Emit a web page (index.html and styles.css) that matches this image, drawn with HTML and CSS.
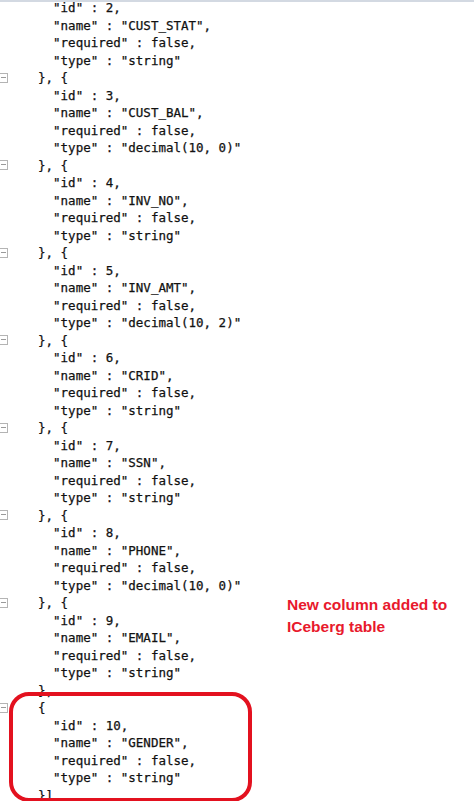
FILE: index.html
```html
<!DOCTYPE html>
<html>
<head>
<meta charset="utf-8">
<link rel="stylesheet" href="styles.css">
</head>
<body>
<div class="topbar"></div>
<div class="page">
  <div class="code">
    <div class="line"><span class="gutter"></span><span class="txt">  "id" : 2,</span></div>
    <div class="line"><span class="gutter"></span><span class="txt">  "name" : "CUST_STAT",</span></div>
    <div class="line"><span class="gutter"></span><span class="txt">  "required" : false,</span></div>
    <div class="line"><span class="gutter"></span><span class="txt">  "type" : "string"</span></div>
    <div class="line"><span class="gutter"><span class="fold"></span></span><span class="txt">}, {</span></div>
    <div class="line"><span class="gutter"></span><span class="txt">  "id" : 3,</span></div>
    <div class="line"><span class="gutter"></span><span class="txt">  "name" : "CUST_BAL",</span></div>
    <div class="line"><span class="gutter"></span><span class="txt">  "required" : false,</span></div>
    <div class="line"><span class="gutter"></span><span class="txt">  "type" : "decimal(10, 0)"</span></div>
    <div class="line"><span class="gutter"><span class="fold"></span></span><span class="txt">}, {</span></div>
    <div class="line"><span class="gutter"></span><span class="txt">  "id" : 4,</span></div>
    <div class="line"><span class="gutter"></span><span class="txt">  "name" : "INV_NO",</span></div>
    <div class="line"><span class="gutter"></span><span class="txt">  "required" : false,</span></div>
    <div class="line"><span class="gutter"></span><span class="txt">  "type" : "string"</span></div>
    <div class="line"><span class="gutter"><span class="fold"></span></span><span class="txt">}, {</span></div>
    <div class="line"><span class="gutter"></span><span class="txt">  "id" : 5,</span></div>
    <div class="line"><span class="gutter"></span><span class="txt">  "name" : "INV_AMT",</span></div>
    <div class="line"><span class="gutter"></span><span class="txt">  "required" : false,</span></div>
    <div class="line"><span class="gutter"></span><span class="txt">  "type" : "decimal(10, 2)"</span></div>
    <div class="line"><span class="gutter"><span class="fold"></span></span><span class="txt">}, {</span></div>
    <div class="line"><span class="gutter"></span><span class="txt">  "id" : 6,</span></div>
    <div class="line"><span class="gutter"></span><span class="txt">  "name" : "CRID",</span></div>
    <div class="line"><span class="gutter"></span><span class="txt">  "required" : false,</span></div>
    <div class="line"><span class="gutter"></span><span class="txt">  "type" : "string"</span></div>
    <div class="line"><span class="gutter"><span class="fold"></span></span><span class="txt">}, {</span></div>
    <div class="line"><span class="gutter"></span><span class="txt">  "id" : 7,</span></div>
    <div class="line"><span class="gutter"></span><span class="txt">  "name" : "SSN",</span></div>
    <div class="line"><span class="gutter"></span><span class="txt">  "required" : false,</span></div>
    <div class="line"><span class="gutter"></span><span class="txt">  "type" : "string"</span></div>
    <div class="line"><span class="gutter"><span class="fold"></span></span><span class="txt">}, {</span></div>
    <div class="line"><span class="gutter"></span><span class="txt">  "id" : 8,</span></div>
    <div class="line"><span class="gutter"></span><span class="txt">  "name" : "PHONE",</span></div>
    <div class="line"><span class="gutter"></span><span class="txt">  "required" : false,</span></div>
    <div class="line"><span class="gutter"></span><span class="txt">  "type" : "decimal(10, 0)"</span></div>
    <div class="line"><span class="gutter"><span class="fold"></span></span><span class="txt">}, {</span></div>
    <div class="line"><span class="gutter"></span><span class="txt">  "id" : 9,</span></div>
    <div class="line"><span class="gutter"></span><span class="txt">  "name" : "EMAIL",</span></div>
    <div class="line"><span class="gutter"></span><span class="txt">  "required" : false,</span></div>
    <div class="line"><span class="gutter"></span><span class="txt">  "type" : "string"</span></div>
    <div class="line"><span class="gutter"></span><span class="txt">},</span></div>
    <div class="highlight">
      <div class="line"><span class="gutter"><span class="fold"></span></span><span class="txt">{</span></div>
      <div class="line"><span class="gutter"></span><span class="txt">  "id" : 10,</span></div>
      <div class="line"><span class="gutter"></span><span class="txt">  "name" : "GENDER",</span></div>
      <div class="line"><span class="gutter"></span><span class="txt">  "required" : false,</span></div>
      <div class="line"><span class="gutter"></span><span class="txt">  "type" : "string"</span></div>
      <div class="line"><span class="gutter"></span><span class="txt">}]</span></div>
    </div>
  </div>
  <div class="note">New column added to<br>ICeberg table</div>
</div>
</body>
</html>
```

FILE: styles.css
```css
html, body {
  margin: 0;
  padding: 0;
  background: #ffffff;
  width: 474px;
  height: 801px;
  overflow: hidden;
}

.topbar {
  height: 2px;
  background: #d3d9e2;
  position: relative;
  z-index: 2;
}

.page {
  position: relative;
  margin-top: -3px;
}

.code {
  font-family: "DejaVu Sans Mono", "Liberation Mono", monospace;
  font-size: 12.5px;
  color: #111111;
  -webkit-text-stroke: 0.25px #111111;
}

.line {
  display: flex;
  height: 17.5px;
  line-height: 17.5px;
  align-items: center;
}

.gutter {
  width: 38px;
  flex: none;
  display: flex;
  align-items: center;
  height: 100%;
}

.txt {
  white-space: pre;
}

.fold {
  display: block;
  width: 7px;
  height: 8px;
  margin-left: -1px;
  border: 1px solid #b4b4b4;
  position: relative;
}

.fold::after {
  content: "";
  position: absolute;
  left: 1px;
  right: 1px;
  top: 3px;
  height: 1px;
  background: #9a9a9a;
}

.highlight {
  position: relative;
}

.highlight::after {
  content: "";
  position: absolute;
  left: 9px;
  top: -7px;
  width: 243px;
  height: 110px;
  border: 4px solid #e3111f;
  border-radius: 20px;
  box-sizing: border-box;
}

.note {
  position: absolute;
  left: 287px;
  top: 595px;
  font-family: "Liberation Sans", Arial, sans-serif;
  font-weight: bold;
  font-size: 15.5px;
  line-height: 22px;
  color: #e8192c;
}
```
